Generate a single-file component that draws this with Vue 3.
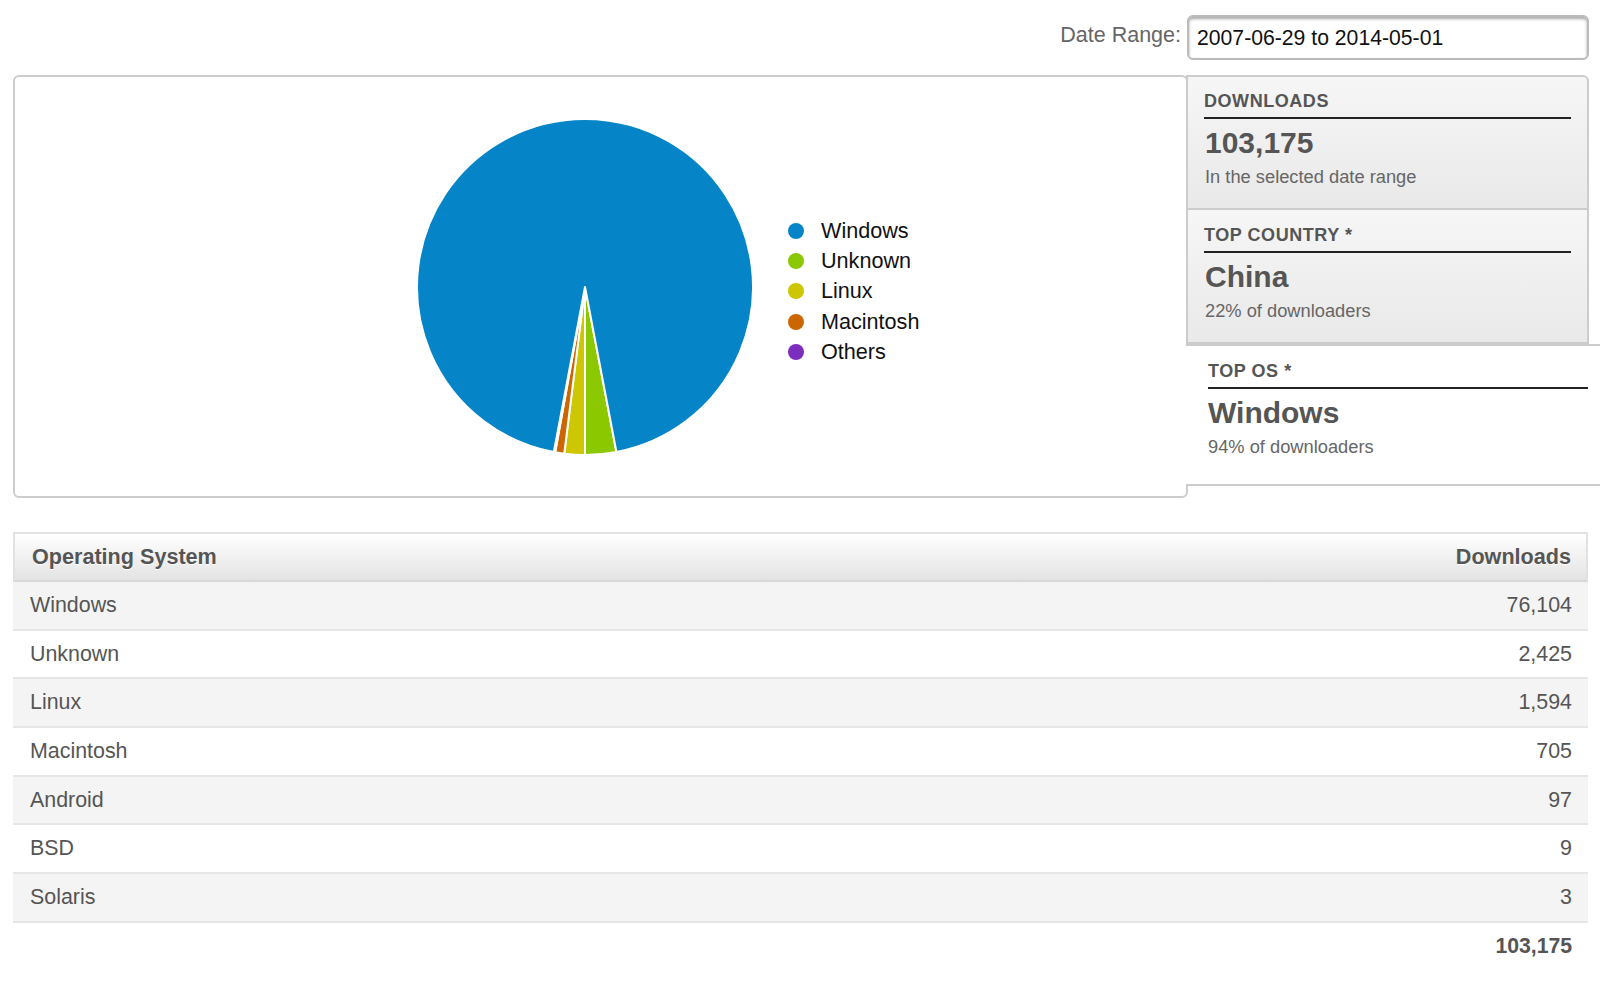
<template>
  <div class="page">
    <div class="date-bar">
      <label class="date-label">Date Range:</label>
      <input class="date-input" type="text" value="2007-06-29 to 2014-05-01" readonly />
    </div>

    <div class="overview">
      <div class="chart-box">
        <svg class="pie" width="340" height="340" viewBox="-170 -170 340 340">
          <path
            v-for="s in slices"
            :key="s.name"
            :d="s.d"
            :fill="s.color"
            stroke="#fff"
            stroke-width="2"
            stroke-linejoin="round"
          />
        </svg>
        <ul class="legend">
          <li v-for="l in legend" :key="l.name">
            <span class="dot" :style="{ background: l.color }"></span>{{ l.name }}
          </li>
        </ul>
      </div>

      <div class="stats">
        <div v-for="t in stats" :key="t.title" class="stat" :class="{ active: t.active }">
          <h4>{{ t.title }}</h4>
          <strong>{{ t.value }}</strong>
          <p>{{ t.note }}</p>
        </div>
      </div>
    </div>

    <div class="table">
      <div class="row head">
        <span>Operating System</span>
        <span>Downloads</span>
      </div>
      <div v-for="r in rows" :key="r.name" class="row">
        <span>{{ r.name }}</span>
        <span>{{ r.count.toLocaleString('en-US') }}</span>
      </div>
      <div class="total">103,175</div>
    </div>
  </div>
</template>

<script setup>
const rows = [
  { name: 'Windows', count: 76104 },
  { name: 'Unknown', count: 2425 },
  { name: 'Linux', count: 1594 },
  { name: 'Macintosh', count: 705 },
  { name: 'Android', count: 97 },
  { name: 'BSD', count: 9 },
  { name: 'Solaris', count: 3 }
]

const legend = [
  { name: 'Windows', color: '#0585c8', value: 76104 },
  { name: 'Unknown', color: '#8cc800', value: 2425 },
  { name: 'Linux', color: '#cdc600', value: 1594 },
  { name: 'Macintosh', color: '#cc6600', value: 705 },
  { name: 'Others', color: '#7c2dbd', value: 109 }
]

const stats = [
  { title: 'DOWNLOADS', value: '103,175', note: 'In the selected date range' },
  { title: 'TOP COUNTRY *', value: 'China', note: '22% of downloaders' },
  { title: 'TOP OS *', value: 'Windows', note: '94% of downloaders', active: true }
]

// pie starts on the right of straight down and runs clockwise, windows last
const R = 168
const total = legend.reduce((sum, l) => sum + l.value, 0)
const order = [legend[1], legend[2], legend[3], legend[4], legend[0]]
let angle = (legend[1].value / total) * Math.PI * 2

const point = (a) => `${(Math.sin(a) * R).toFixed(2)} ${(Math.cos(a) * R).toFixed(2)}`

const slices = order.map((l) => {
  const sweep = (l.value / total) * Math.PI * 2
  const from = angle
  const to = angle - sweep
  angle = to
  const large = sweep > Math.PI ? 1 : 0
  return { ...l, d: `M0 0L${point(from)}A${R} ${R} 0 ${large} 1 ${point(to)}Z` }
})
</script>

<style>
html,
body {
  margin: 0;
  background: #fff;
  overflow: hidden;
}
</style>

<style scoped>
.page {
  width: 1600px;
  height: 981px;
  box-sizing: border-box;
  padding: 0 11px 0 13px;
  font-family: "Liberation Sans", Arial, sans-serif;
  color: #555;
}

.date-bar {
  display: flex;
  justify-content: flex-end;
  align-items: center;
  gap: 7px;
  height: 75px;
  padding-bottom: 1px;
  box-sizing: border-box;
}

.date-label {
  font-size: 21.5px;
  color: #666;
  margin-bottom: 4px;
  margin-right: -1px;
}

.date-input {
  width: 402px;
  height: 45px;
  box-sizing: border-box;
  padding: 2px 8px 0;
  border: 2px solid #bbb;
  border-radius: 6px;
  box-shadow: inset 0 2px 3px rgba(0, 0, 0, 0.35);
  font: 21.2px "Liberation Sans", Arial, sans-serif;
  color: #111;
  outline: none;
}

.overview {
  display: flex;
  align-items: flex-start;
}

.chart-box {
  flex: 1;
  height: 423px;
  box-sizing: border-box;
  border: 2px solid #ccc;
  border-radius: 6px;
  display: flex;
  align-items: flex-start;
  padding: 40px 0 0 400px;
}

.pie {
  flex: none;
}

.legend {
  list-style: none;
  margin: 99px 0 0 33px;
  padding: 0;
  font-size: 21.6px;
  color: #111;
}

.legend li {
  display: flex;
  align-items: center;
  height: 30.2px;
}

.dot {
  width: 16px;
  height: 16px;
  border-radius: 50%;
  margin-right: 17px;
}

.stats {
  width: 403px;
  margin-left: -2px;
  position: relative;
}

.stat {
  height: 134px;
  box-sizing: border-box;
  padding: 15px 16px 0 16px;
  border: 2px solid #ccc;
  border-top-width: 0;
  background: linear-gradient(#f6f6f6, #e9e9e9);
}

.stat:first-child {
  height: 135px;
  padding-top: 14px;
  border-top: 2px solid #ccc;
  border-top-right-radius: 6px;
}

.stat h4 {
  margin: 0;
  padding-bottom: 5px;
  font-size: 18px;
  line-height: 21px;
  letter-spacing: 0.55px;
  color: #555;
  border-bottom: 2px solid #222;
}

.stat strong {
  display: block;
  margin: 6px 0 0 1px;
  font-size: 30px;
  line-height: 36px;
  color: #555;
}

.stat p {
  margin: 5px 0 0 1px;
  font-size: 18.3px;
  line-height: 21px;
  color: #666;
}

.stat.active {
  height: 142px;
  width: 414px;
  padding: 15px 12px 0 22px;
  background: #fff;
  border-width: 0 0 2px;
  border-top: 2px solid #ccc;
}

.stat.active strong,
.stat.active p {
  margin-left: 0;
}

.table {
  margin: 34px 1px 0 0;
  font-size: 21.4px;
}

.row {
  display: flex;
  justify-content: space-between;
  align-items: center;
  height: 48.7px;
  box-sizing: border-box;
  padding: 0 16px 0 17px;
  border-bottom: 2px solid #e6e6e6;
}

.row:nth-child(even) {
  background: #f4f4f4;
}

.row.head {
  height: 50px;
  padding: 0 15px 0 17px;
  font-size: 21.6px;
  font-weight: bold;
  border: 2px solid #e2e2e2;
  border-bottom-color: #d8d8d8;
  background: linear-gradient(#fff, #e3e3e3);
  text-shadow: 0 1px 0 #fff;
}

.total {
  padding: 11px 16px 0 0;
  text-align: right;
  font-weight: bold;
  font-size: 21.2px;
}
</style>
